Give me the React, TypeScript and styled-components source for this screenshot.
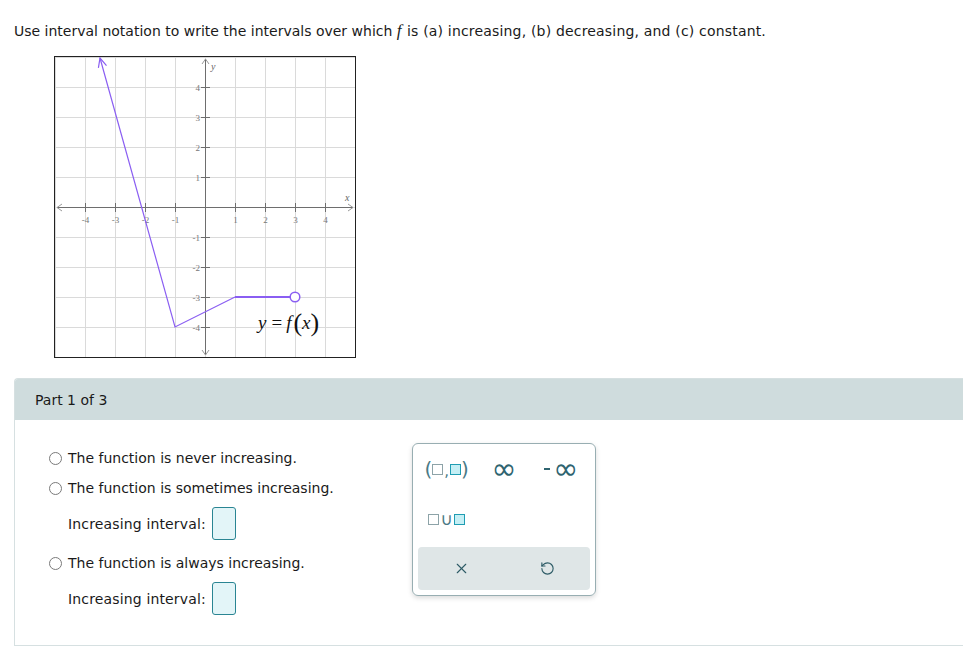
import React from 'react';
import styled, { createGlobalStyle } from 'styled-components';
import { X, RotateCcw } from 'lucide-react';

const GlobalStyle = createGlobalStyle`
    html, body {
        margin: 0;
        padding: 0;
        background: #fff;
        overflow: hidden;
    }
    body {
        font-family: 'DejaVu Sans', Verdana, sans-serif;
        color: #1a1a1a;
    }
`;

const Page = styled.div`
    width: 963px;
    height: 650px;
    padding-top: 21px;
    box-sizing: border-box;
`;

const Prompt = styled.div`
    margin-left: 14px;
    font-size: 14px;
    line-height: 20px;
`;

const MathF = styled.span`
    font-family: 'Liberation Serif', serif;
    font-style: italic;
    font-size: 17px;
    margin-right: 1px;
`;

const Tail = styled.span`
    letter-spacing: 0.18px;
`;

const GraphFrame = styled.div`
    margin: 15px 0 0 54px;
    width: 300px;
    height: 300px;
    border: 1px solid #222;
`;

const PartPanel = styled.section`
    margin: 20px 0 0 14px;
    height: 268px;
    border: 1px solid #d6e0e1;
    border-right: none;
    border-top-left-radius: 4px;
    box-sizing: border-box;
`;

const PartHeader = styled.div`
    height: 41px;
    background: #cfdcdd;
    display: flex;
    align-items: center;
    padding-left: 20px;
    font-size: 14px;
    border-top-left-radius: 3px;
`;

const PartBody = styled.div`
    display: flex;
    padding-top: 23px;
`;

const Options = styled.div`
    width: 363px;
    padding-left: 34px;
    padding-top: 6px;
    display: flex;
    flex-direction: column;
`;

const OptionRow = styled.label<{ $gap: number }>`
    display: flex;
    align-items: center;
    height: 18px;
    margin-bottom: ${p => p.$gap}px;
    font-size: 14px;
`;

const Radio = styled.span`
    width: 11px;
    height: 11px;
    border: 1px solid #7a7a7a;
    border-radius: 50%;
    margin-right: 6px;
    background: #fff;
`;

const IntervalRow = styled.div<{ $gap: number }>`
    display: flex;
    align-items: center;
    padding-left: 19px;
    gap: 6px;
    margin-bottom: ${p => p.$gap}px;
    font-size: 14px;
    letter-spacing: 0.15px;
`;

const AnswerBox = styled.span`
    width: 22px;
    height: 31px;
    background: #e3f5f8;
    border: 1.5px solid #2a8593;
    border-radius: 3px;
`;

const Keypad = styled.div`
    width: 184px;
    height: 153px;
    border: 1px solid #98aeb2;
    border-radius: 6px;
    box-shadow: 0 2px 5px rgba(0, 0, 0, 0.15);
    padding: 0 5px 5px 5px;
    box-sizing: border-box;
    display: flex;
    flex-direction: column;
`;

const KeyGrid = styled.div`
    display: grid;
    grid-template-columns: repeat(3, 1fr);
    grid-auto-rows: 50px;
    height: 97px;
`;

const Key = styled.div`
    display: flex;
    align-items: center;
    justify-content: center;
    color: #2f6470;
`;

const Paren = styled.span`
    font-size: 20px;
    color: #4b7a85;
    line-height: 1;
`;

const Slot = styled.span<{ $active?: boolean }>`
    display: inline-block;
    width: 9px;
    height: 9px;
    border: 1.5px solid ${p => (p.$active ? '#1f9db3' : '#8da3a8')};
    background: ${p => (p.$active ? '#c5eff5' : '#fff')};
`;

const Comma = styled.span`
    font-size: 15px;
    color: #4b7a85;
    margin: 4px 1px 0;
`;

const Union = styled.span`
    font-size: 17px;
    color: #4b7a85;
    margin: 0 1px;
    line-height: 1;
`;

const Infinity = styled.span`
    font-size: 30px;
    color: #2f6470;
    line-height: 1;
    display: flex;
    align-items: center;
`;

const Minus = styled.span`
    width: 6px;
    height: 2px;
    background: #2f6470;
    margin-right: 3px;
`;

const ActionBar = styled.div`
    margin-top: 6px;
    height: 43px;
    background: #dfe6e7;
    border-radius: 4px;
    display: grid;
    grid-template-columns: 1fr 1fr;
`;

const ActionKey = styled.div`
    display: flex;
    align-items: center;
    justify-content: center;
    color: #2d5b66;
`;

const U = 30;
const ox = 150;
const oy = 150;
const px = (x: number) => ox + x * U;
const py = (y: number) => oy - y * U;

const Graph = () => {
    const ticks = [-4, -3, -2, -1, 1, 2, 3, 4];
    const grid = [-5, -4, -3, -2, -1, 0, 1, 2, 3, 4, 5];
    const purple = '#8a5ef2';
    return (
        <svg width={300} height={300} viewBox='0 0 300 300'>
            {grid.map(g => (
                <g key={g}>
                    <line x1={px(g) + 0.5} x2={px(g) + 0.5} y1={0} y2={300} stroke='#dadada' strokeWidth={1} />
                    <line y1={py(g) + 0.5} y2={py(g) + 0.5} x1={0} x2={300} stroke='#dadada' strokeWidth={1} />
                </g>
            ))}
            <line x1={2} x2={298} y1={oy + 0.5} y2={oy + 0.5} stroke='#6e6e6e' strokeWidth={1} />
            <line y1={2} y2={298} x1={ox + 0.5} x2={ox + 0.5} stroke='#6e6e6e' strokeWidth={1} />
            <polyline points='7,147 2,150.5 7,154' fill='none' stroke='#9a9a9a' strokeWidth={1} />
            <polyline points='293,147 298,150.5 293,154' fill='none' stroke='#9a9a9a' strokeWidth={1} />
            <polyline points='147,7 150.5,2 154,7' fill='none' stroke='#9a9a9a' strokeWidth={1} />
            <polyline points='147,293 150.5,298 154,293' fill='none' stroke='#9a9a9a' strokeWidth={1} />
            {ticks.map(t => (
                <g key={t} fontFamily="'Liberation Serif', serif" fontSize={9} fill='#777'>
                    <line x1={px(t) + 0.5} x2={px(t) + 0.5} y1={oy - 4} y2={oy + 5} stroke='#6e6e6e' />
                    <line y1={py(t) + 0.5} y2={py(t) + 0.5} x1={ox - 4} x2={ox + 5} stroke='#6e6e6e' />
                    <text x={px(t) + 0.5} y={oy + 16} textAnchor='middle'>{t < 0 ? `-${-t}` : t}</text>
                    <text x={ox - 5} y={py(t) + 3.5} textAnchor='end'>{t < 0 ? `-${-t}` : t}</text>
                </g>
            ))}
            <text x={290} y={144} fontFamily="'Liberation Serif', serif" fontStyle='italic' fontSize={10} fill='#666'>x</text>
            <text x={156} y={13} fontFamily="'Liberation Serif', serif" fontStyle='italic' fontSize={10} fill='#666'>y</text>
            <polyline
                points={`${px(-3.5)},${py(5) + 1} ${px(-1)},${py(-4)} ${px(1)},${py(-3)}`}
                fill='none'
                stroke={purple}
                strokeWidth={1.2}
            />
            <line x1={px(1)} x2={px(3) - 5} y1={py(-3)} y2={py(-3)} stroke={purple} strokeWidth={2} />
            <polyline
                points={`${px(-3.5) - 1.6},${py(5) + 10.8} ${px(-3.5)},${py(5) + 1} ${px(-3.5) + 6.5},${py(5) + 8.6}`}
                fill='none'
                stroke={purple}
                strokeWidth={1.2}
            />
            <circle cx={px(3)} cy={py(-3)} r={4.8} fill='#fff' stroke={purple} strokeWidth={1.5} />
            <text x={203} y={272} fontFamily="'Liberation Serif', serif" fontSize={19} fill='#111'>
                <tspan fontStyle='italic'>y</tspan>
                <tspan dx={5}>=</tspan>
                <tspan dx={4} fontStyle='italic'>f</tspan>
                <tspan fontSize={26} dy={2} dx={2}>(</tspan>
                <tspan fontStyle='italic' dy={-2}>x</tspan>
                <tspan fontSize={26} dy={2}>)</tspan>
            </text>
        </svg>
    );
};

export default function App() {
    return (
        <Page>
            <GlobalStyle />
            <Prompt>
                Use interval notation to write the intervals over which{' '}<MathF>f</MathF>{' '}
                <Tail>is (a) increasing, (b) decreasing, and (c) constant.</Tail>
            </Prompt>
            <GraphFrame>
                <Graph />
            </GraphFrame>
            <PartPanel>
                <PartHeader>Part 1 of 3</PartHeader>
                <PartBody>
                    <Options>
                        <OptionRow $gap={12}><Radio />The function is never increasing.</OptionRow>
                        <OptionRow $gap={10}><Radio />The function is sometimes increasing.</OptionRow>
                        <IntervalRow $gap={14}>Increasing interval: <AnswerBox /></IntervalRow>
                        <OptionRow $gap={10}><Radio />The function is always increasing.</OptionRow>
                        <IntervalRow $gap={0}>Increasing interval: <AnswerBox /></IntervalRow>
                    </Options>
                    <Keypad>
                        <KeyGrid>
                            <Key>
                                <Paren>(</Paren>
                                <Slot />
                                <Comma>,</Comma>
                                <Slot $active />
                                <Paren>)</Paren>
                            </Key>
                            <Key><Infinity>∞</Infinity></Key>
                            <Key><Infinity><Minus />∞</Infinity></Key>
                            <Key>
                                <Slot />
                                <Union>∪</Union>
                                <Slot $active />
                            </Key>
                        </KeyGrid>
                        <ActionBar>
                            <ActionKey><X size={17} strokeWidth={1.6} /></ActionKey>
                            <ActionKey><RotateCcw size={15} strokeWidth={1.8} /></ActionKey>
                        </ActionBar>
                    </Keypad>
                </PartBody>
            </PartPanel>
        </Page>
    );
}
